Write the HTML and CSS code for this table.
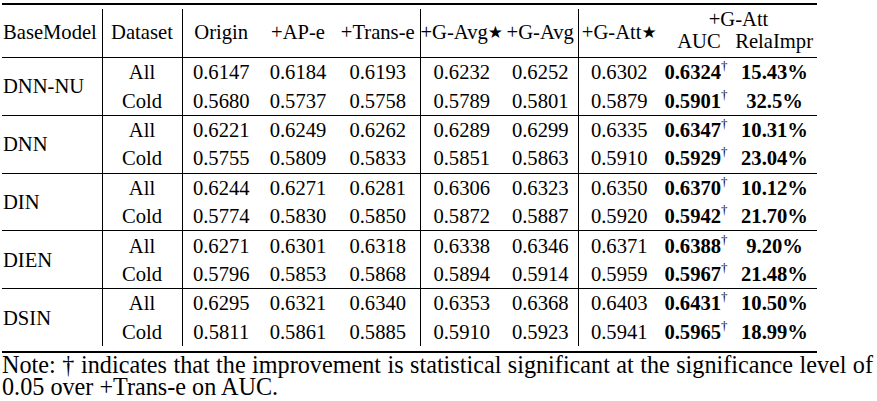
FILE: index.html
```html
<!DOCTYPE html>
<html>
<head>
<meta charset="utf-8">
<link rel="stylesheet" href="styles.css">
</head>
<body>
<div class="page">
  <div class="tablewrap">
    <table class="results">
      <colgroup>
        <col class="w-model"><col class="w-data"><col class="w-orig"><col class="w-ap"><col class="w-trans">
        <col class="w-gavgs"><col class="w-gavg"><col class="w-gatts"><col class="w-auc"><col class="w-rel">
      </colgroup>
      <thead>
        <tr class="h1">
          <th rowspan="2" class="model vr mid">BaseModel</th>
          <th rowspan="2" class="vr mid">Dataset</th>
          <th rowspan="2" class="mid">Origin</th>
          <th rowspan="2" class="mid">+AP-e</th>
          <th rowspan="2" class="vr mid">+Trans-e</th>
          <th rowspan="2" class="mid">+G-Avg<span class="star">★</span></th>
          <th rowspan="2" class="vr mid">+G-Avg</th>
          <th rowspan="2" class="mid">+G-Att<span class="star">★</span></th>
          <th colspan="2" class="span">+G-Att</th>
        </tr>
        <tr class="h2"><th class="sub">AUC</th><th class="sub">RelaImpr</th></tr>
      </thead>
      <tbody>
        <tr><td rowspan="2" class="model vr">DNN-NU</td><td class="vr">All</td><td>0.6147</td><td>0.6184</td><td class="vr">0.6193</td><td>0.6232</td><td class="vr">0.6252</td><td>0.6302</td><td class="b">0.6324<sup class="dag">†</sup></td><td class="b">15.43%</td></tr>
        <tr><td class="vr">Cold</td><td>0.5680</td><td>0.5737</td><td class="vr">0.5758</td><td>0.5789</td><td class="vr">0.5801</td><td>0.5879</td><td class="b">0.5901<sup class="dag">†</sup></td><td class="b">32.5%</td></tr>
      </tbody>
      <tbody>
        <tr><td rowspan="2" class="model vr">DNN</td><td class="vr">All</td><td>0.6221</td><td>0.6249</td><td class="vr">0.6262</td><td>0.6289</td><td class="vr">0.6299</td><td>0.6335</td><td class="b">0.6347<sup class="dag">†</sup></td><td class="b">10.31%</td></tr>
        <tr><td class="vr">Cold</td><td>0.5755</td><td>0.5809</td><td class="vr">0.5833</td><td>0.5851</td><td class="vr">0.5863</td><td>0.5910</td><td class="b">0.5929<sup class="dag">†</sup></td><td class="b">23.04%</td></tr>
      </tbody>
      <tbody>
        <tr><td rowspan="2" class="model vr">DIN</td><td class="vr">All</td><td>0.6244</td><td>0.6271</td><td class="vr">0.6281</td><td>0.6306</td><td class="vr">0.6323</td><td>0.6350</td><td class="b">0.6370<sup class="dag">†</sup></td><td class="b">10.12%</td></tr>
        <tr><td class="vr">Cold</td><td>0.5774</td><td>0.5830</td><td class="vr">0.5850</td><td>0.5872</td><td class="vr">0.5887</td><td>0.5920</td><td class="b">0.5942<sup class="dag">†</sup></td><td class="b">21.70%</td></tr>
      </tbody>
      <tbody>
        <tr><td rowspan="2" class="model vr">DIEN</td><td class="vr">All</td><td>0.6271</td><td>0.6301</td><td class="vr">0.6318</td><td>0.6338</td><td class="vr">0.6346</td><td>0.6371</td><td class="b">0.6388<sup class="dag">†</sup></td><td class="b">9.20%</td></tr>
        <tr><td class="vr">Cold</td><td>0.5796</td><td>0.5853</td><td class="vr">0.5868</td><td>0.5894</td><td class="vr">0.5914</td><td>0.5959</td><td class="b">0.5967<sup class="dag">†</sup></td><td class="b">21.48%</td></tr>
      </tbody>
      <tbody>
        <tr><td rowspan="2" class="model vr">DSIN</td><td class="vr">All</td><td>0.6295</td><td>0.6321</td><td class="vr">0.6340</td><td>0.6353</td><td class="vr">0.6368</td><td>0.6403</td><td class="b">0.6431<sup class="dag">†</sup></td><td class="b">10.50%</td></tr>
        <tr><td class="vr">Cold</td><td>0.5811</td><td>0.5861</td><td class="vr">0.5885</td><td>0.5910</td><td class="vr">0.5923</td><td>0.5941</td><td class="b">0.5965<sup class="dag">†</sup></td><td class="b">18.99%</td></tr>
      </tbody>
    </table>
  </div>
  <div class="note">
    <span class="note-line1">Note: † indicates that the improvement is statistical significant at the significance level of</span>
    <span class="note-line2">0.05 over +Trans-e on AUC.</span>
  </div>
</div>
</body>
</html>
```

FILE: styles.css
```css
html, body {
  margin: 0;
  padding: 0;
  background: #ffffff;
}

body {
  color: #000000;
  font-family: "Liberation Serif", "Times New Roman", serif;
}

.page {
  padding: 3px 0 0 2px;
  width: 871px;
}

.tablewrap {
  width: 815px;
  border-top: 2px solid #000;
  border-bottom: 2px solid #000;
  padding: 4px 0 5px 0;
}

.results {
  border-collapse: collapse;
  table-layout: fixed;
  width: 815px;
  font-size: 20.6px;
}

.w-model { width: 100px; }
.w-data { width: 80px; }
.w-orig { width: 78px; }
.w-ap { width: 76px; }
.w-trans { width: 84px; }
.w-gavgs { width: 83px; }
.w-gavg { width: 75px; }
.w-gatts { width: 82px; }
.w-auc { width: 72px; }
.w-rel { width: 85px; }

.results th,
.results td {
  padding: 0;
  font-weight: normal;
  text-align: center;
  white-space: nowrap;
  vertical-align: middle;
}

.results .model {
  text-align: left;
  padding-left: 1px;
}

.results .vr {
  border-right: 1px solid #000;
}

.h1 th {
  height: 20px;
  line-height: 20px;
}

.h1 th.mid {
  padding-bottom: 3px;
}

.h1 th.span {
  padding: 0;
  vertical-align: top;
}

.h2 th {
  height: 26px;
  line-height: 20px;
  vertical-align: top;
  padding-top: 2px;
}

.h2 th.sub:first-child {
  padding-left: 6px;
}

.h2 th.sub:last-child {
  text-align: right;
  padding-right: 4px;
}

thead {
  border-bottom: 1px solid #000;
}

tbody + tbody {
  border-top: 1px solid #000;
}

.results td {
  height: 28.4px;
  line-height: 22px;
}

.results td.b {
  font-weight: bold;
}

.star {
  font-family: "DejaVu Sans", sans-serif;
  font-size: 17px;
  line-height: 0;
  vertical-align: 1px;
}

.dag {
  font-weight: normal;
  font-size: 13px;
  line-height: 0;
  vertical-align: 9px;
}

.note {
  margin-top: 1px;
  font-size: 24.2px;
  line-height: 22px;
}

.note-line1 {
  display: block;
  text-align: justify;
  text-align-last: justify;
}

.note-line2 {
  display: block;
}
```
